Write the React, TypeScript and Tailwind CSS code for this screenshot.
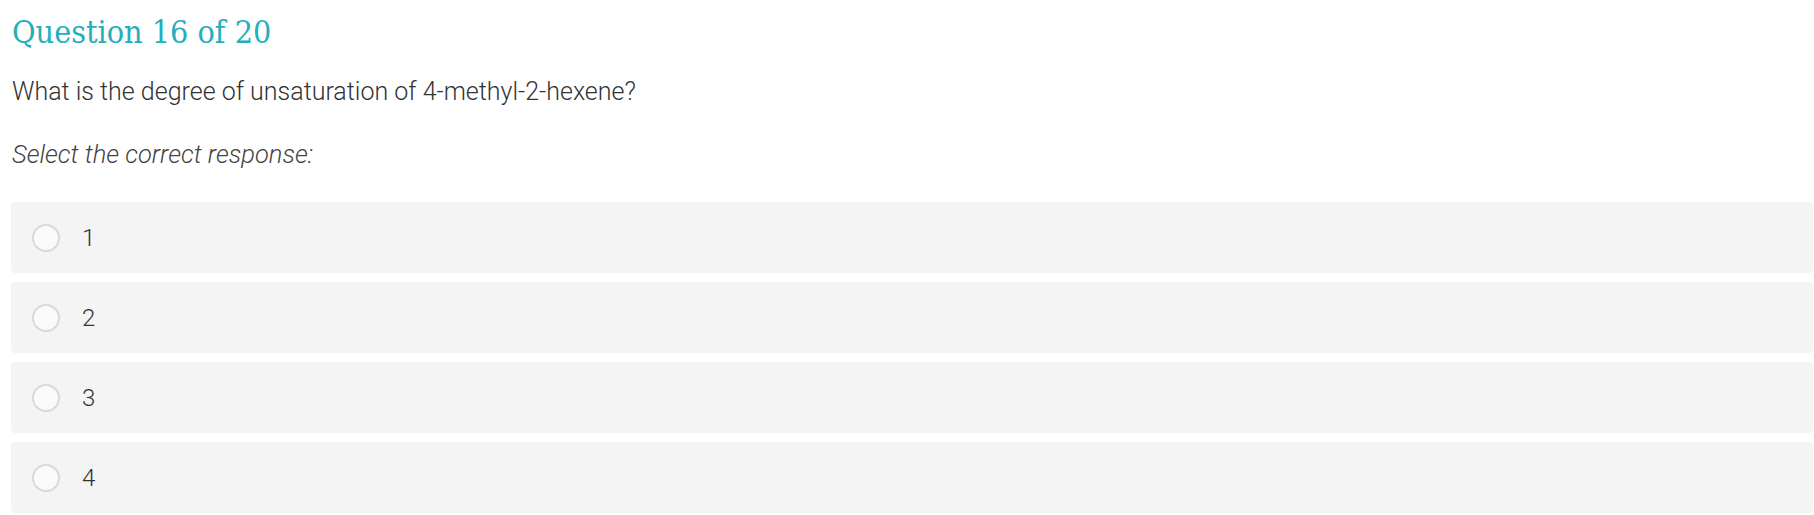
import React from 'react'

const options = ['1', '2', '3', '4']

export default function App() {
  return (
    <div className="min-h-screen bg-white pl-[11px] pr-[1px] pt-[10px]" style={{ fontFamily: 'Roboto, "Noto Sans", sans-serif' }}>
      <h1
        className="pl-[1px] text-[32px] leading-[44px] text-[#25aebb] font-stretch-condensed"
        style={{ fontFamily: '"DejaVu Serif", "Liberation Serif", serif' }}
      >
        Question 16 of 20
      </h1>
      <p className="mt-[23px] pl-[1px] text-[25px] font-light leading-[30px] text-[#333]">
        What is the degree of unsaturation of 4-methyl-2-hexene?
      </p>
      <p className="mt-[32px] pl-[1px] text-[25.5px] font-light italic leading-[30px] text-[#444]">
        Select the correct response:
      </p>
      <div className="mt-[33px] flex flex-col gap-[9px]">
        {options.map((opt) => (
          <label
            key={opt}
            className="flex h-[71px] cursor-pointer items-center rounded-[4px] bg-[#f4f4f4] pl-[21px]"
          >
            <span className="h-[28px] w-[28px] rounded-full border-2 border-[#d9d9d9] bg-[#fafafa]" />
            <span className="ml-[22px] text-[24px] font-light text-[#333]">{opt}</span>
          </label>
        ))}
      </div>
    </div>
  )
}
